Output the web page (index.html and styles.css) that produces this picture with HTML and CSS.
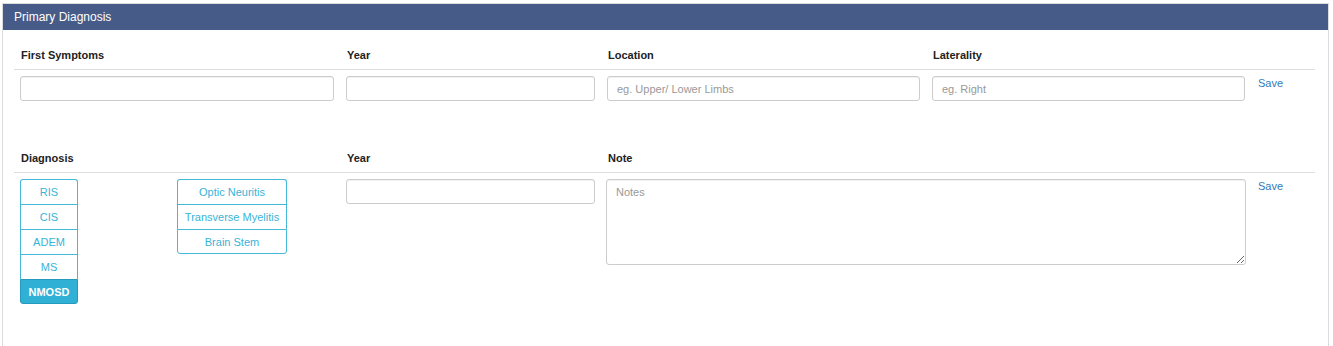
FILE: index.html
```html
<!DOCTYPE html>
<html>
<head>
<meta charset="utf-8">
<link rel="stylesheet" href="styles.css">
</head>
<body>
<div class="panel">
  <div class="panel-heading">Primary Diagnosis</div>
  <div class="panel-body">
    <div class="section">
      <div class="grid head">
        <div class="lbl">First Symptoms</div>
        <div class="lbl">Year</div>
        <div class="lbl">Location</div>
        <div class="lbl">Laterality</div>
        <div></div>
      </div>
      <div class="grid fields">
        <input class="input" type="text">
        <input class="input" type="text">
        <input class="input" type="text" placeholder="eg. Upper/ Lower Limbs">
        <input class="input" type="text" placeholder="eg. Right">
        <a class="save" href="#">Save</a>
      </div>
    </div>
    <div class="section second">
      <div class="grid head">
        <div class="lbl">Diagnosis</div>
        <div class="lbl">Year</div>
        <div class="lbl">Note</div>
        <div></div>
        <div></div>
      </div>
      <div class="grid fields">
        <div class="diag">
          <div class="btn-group narrow">
            <button class="btn">RIS</button>
            <button class="btn">CIS</button>
            <button class="btn">ADEM</button>
            <button class="btn">MS</button>
            <button class="btn active">NMOSD</button>
          </div>
          <div class="btn-group wide">
            <button class="btn">Optic Neuritis</button>
            <button class="btn">Transverse Myelitis</button>
            <button class="btn">Brain Stem</button>
          </div>
        </div>
        <input class="input" type="text">
        <textarea class="input notes" placeholder="Notes"></textarea>
        <a class="save" href="#">Save</a>
      </div>
    </div>
  </div>
</div>
</body>
</html>
```
FILE: styles.css
```css
* { box-sizing: border-box; }
html, body { margin: 0; padding: 0; background: #fff; }
body {
  font-family: "Liberation Sans", Arial, sans-serif;
  font-size: 11px;
  color: #333;
}
.panel {
  margin: 3px 4px 0 2px;
  border: 1px solid #dcdcdc;
  border-bottom: none;
  height: 343px;
}
.panel-heading {
  background: #465b87;
  color: #fff;
  font-size: 12px;
  height: 26px;
  line-height: 26px;
  padding-left: 11px;
}
.panel-body {
  padding: 18px 13px 0 11px;
}
.grid {
  display: grid;
  grid-template-columns: 314px 249px 313px 313px auto;
  column-gap: 12px;
  padding-left: 6px;
}
.head {
  border-bottom: 1px solid #dedede;
  padding-bottom: 7px;
}
.lbl {
  font-weight: bold;
  line-height: 14px;
  color: #222;
  padding-left: 1px;
}
.fields {
  margin-top: 6px;
  align-items: start;
}
.second { margin-top: 50px; }
.input {
  height: 25px;
  border: 1px solid #ccc;
  border-radius: 3px;
  box-shadow: inset 0 1px 1px rgba(0,0,0,0.06);
  padding: 0 9px;
  font-family: "Liberation Sans", Arial, sans-serif;
  font-size: 11px;
  color: #555;
  width: 100%;
  margin: 0;
  outline: none;
}
.input::placeholder { color: #999; }
.notes {
  grid-column: 3 / span 2;
  height: 86px;
  padding: 6px 9px;
  resize: vertical;
  margin-left: -1px;
  width: calc(100% + 2px);
}
.save {
  color: #337ab7;
  text-decoration: none;
  line-height: 14px;
  padding-left: 1px;
}
.diag {
  display: flex;
  gap: 99px;
}
.btn-group {
  display: flex;
  flex-direction: column;
}
.btn-group.narrow { width: 58px; }
.btn-group.wide { width: 110px; }
.btn {
  height: 25px;
  border: 1px solid #46b8da;
  border-bottom: none;
  background: #fff;
  color: #39b3d7;
  font-family: "Liberation Sans", Arial, sans-serif;
  font-size: 11px;
  padding: 0;
  margin: 0;
  border-radius: 0;
  text-align: center;
}
.btn:first-child { border-radius: 3px 3px 0 0; }
.btn:last-child { border-bottom: 1px solid #46b8da; border-radius: 0 0 3px 3px; }
.btn.active {
  background: #31b0d5;
  border-color: #269abc;
  color: #fff;
  font-weight: bold;
}
.btn.active:last-child { border-bottom-color: #269abc; }
```
